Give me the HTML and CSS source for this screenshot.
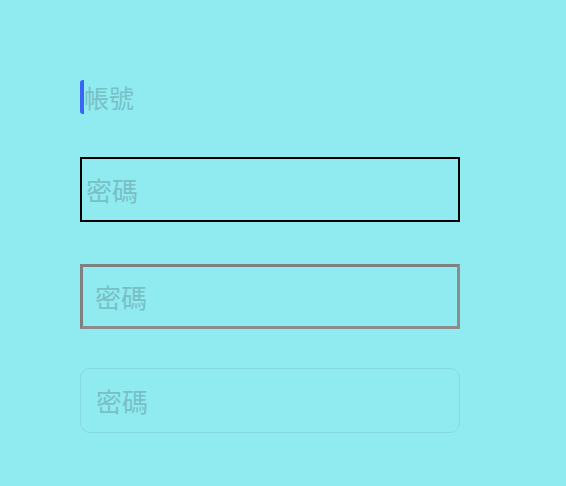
FILE: index.html
```html
<!DOCTYPE html>
<html lang="zh-Hant">
<head>
<meta charset="utf-8">
<link rel="stylesheet" href="styles.css">
</head>
<body>
<form class="form">
  <input class="field field-account" type="text" placeholder="帳號">
  <input class="field field-solid" type="password" placeholder="密碼">
  <input class="field field-inset" type="password" placeholder="密碼">
  <input class="field field-soft" type="password" placeholder="密碼">
</form>
</body>
</html>
```
FILE: styles.css
```css
html, body {
  margin: 0;
  height: 100%;
  background: #90ebf1;
}
body {
  padding: 80px 0 0 80px;
  box-sizing: border-box;
}
.form {
  width: 380px;
  display: flex;
  flex-direction: column;
}
.field {
  box-sizing: border-box;
  width: 380px;
  background: transparent;
  font-family: "Noto Sans CJK TC", "Noto Sans", sans-serif;
  font-size: 26px;
  font-weight: 400;
  color: #333;
  outline: none;
  margin: 0;
}
.field::placeholder {
  color: #78c0c6;
  opacity: 1;
}
.field-account {
  height: 34px;
  border: none;
  border-left: 4px solid #3a64f2;
  border-radius: 3px;
  padding: 0;
  width: 120px;
  font-size: 25px;
}
.field-solid {
  margin-top: 43px;
  height: 65px;
  border: 2px solid #000;
  padding: 0 0 0 4px;
}
.field-inset {
  margin-top: 42px;
  height: 65px;
  border: 3px solid;
  border-color: #7f7f7f #8c8c8c #8c8c8c #7f7f7f;
  padding: 0 0 0 12px;
}
.field-soft {
  margin-top: 39px;
  height: 65px;
  border: 1px solid rgba(0, 0, 0, 0.08);
  border-radius: 10px;
  padding: 0 0 0 15px;
}
```
